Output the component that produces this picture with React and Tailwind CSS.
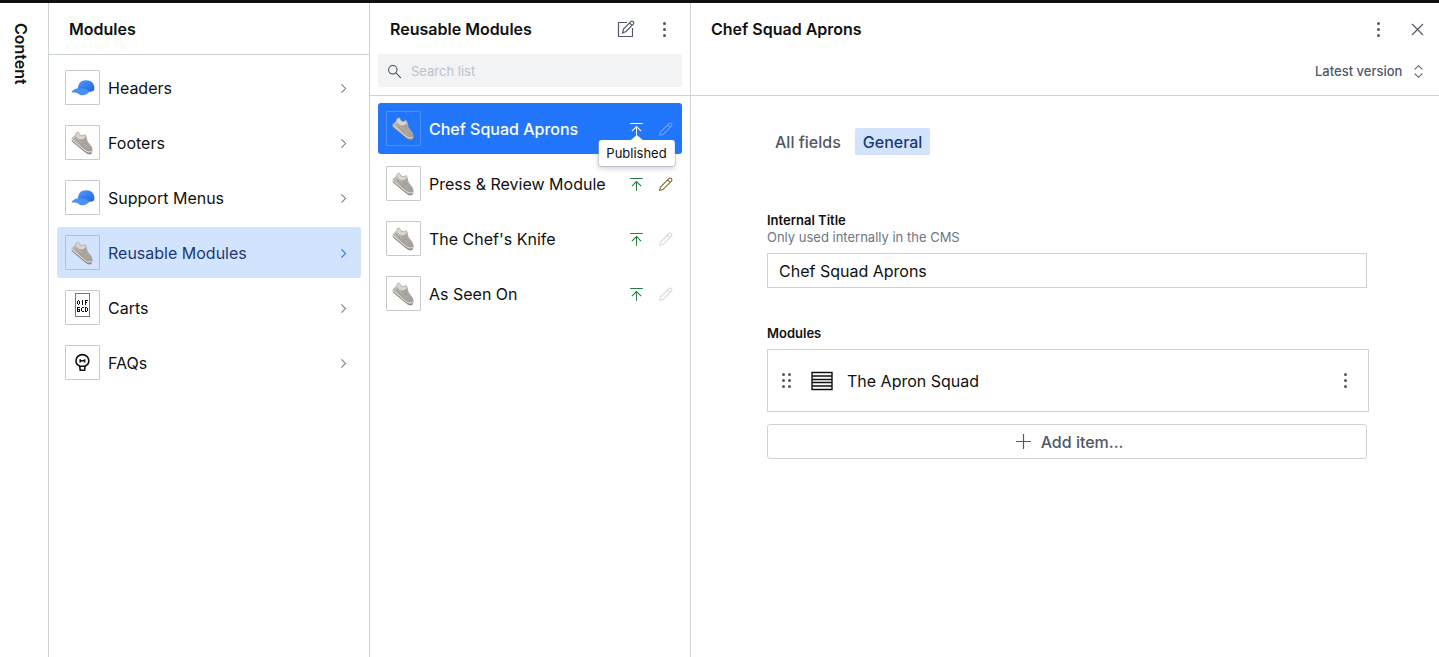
import { useState } from 'react';
import clsx from 'clsx';

const Icon = ({ className = 'size-[21px]', children }) => (
    <svg viewBox="0 0 25 25" fill="none" stroke="currentColor" strokeWidth="1.2" className={clsx('shrink-0', className)} aria-hidden="true">
        {children}
    </svg>
);

const ChevronIcon = () => (
    <Icon><path d="M10 7.5L15 12.5L10 17.5" /></Icon>
);

const PublishIcon = () => (
    <Icon><path d="M5 5.5H20M12.5 9V20M7 14.5L12.5 9L18 14.5" /></Icon>
);

const EditIcon = () => (
    <Icon><path d="M15 7L18 10M5.5 19.5L6.5 15.5L16.5 5.5C17.3 4.7 18.7 4.7 19.5 5.5C20.3 6.3 20.3 7.7 19.5 8.5L9.5 18.5L5.5 19.5Z" /></Icon>
);

const ComposeIcon = () => (
    <Icon className="size-[25px]">
        <path d="M14 5.5H5.5V19.5H19.5V11M9.5 16L10.5 12L17.8 4.7C18.4 4.1 19.4 4.1 20 4.7L20.3 5C20.9 5.6 20.9 6.6 20.3 7.2L13 14.5L9.5 16ZM16.5 6L19 8.5" />
    </Icon>
);

const EllipsisIcon = () => (
    <Icon className="size-[25px]">
        <g fill="currentColor" stroke="none">
            <circle cx="12.5" cy="6.5" r="1.5" />
            <circle cx="12.5" cy="12.5" r="1.5" />
            <circle cx="12.5" cy="18.5" r="1.5" />
        </g>
    </Icon>
);

const DragIcon = () => (
    <Icon className="size-[25px]">
        <g fill="currentColor" stroke="none">
            {[6.5, 12.5, 18.5].map((y) => (
                <g key={y}>
                    <circle cx="9.5" cy={y} r="1.5" />
                    <circle cx="15.5" cy={y} r="1.5" />
                </g>
            ))}
        </g>
    </Icon>
);

const CapArt = () => (
    <svg viewBox="0 0 24 24" className="size-6" aria-hidden="true">
        <defs>
            <linearGradient id="cap" x1="0" y1="0" x2="1" y2="1">
                <stop offset="0" stopColor="#4f9bff" />
                <stop offset="1" stopColor="#1f63dc" />
            </linearGradient>
        </defs>
        <path d="M7 13C6.8 7.5 10 4.2 15 4.2C20.5 4.2 23.5 7.5 23.4 12.5C23.3 14.7 22 15.6 19 15.8L13 15Z" fill="url(#cap)" />
        <path d="M7 12.2C11 11.4 15.5 12.2 18.8 15.5C15.5 19.5 11 20.6 6.8 17.4C4.8 16 2.6 16.6 0.8 16.4C0.5 14.8 3.4 13 7 12.2Z" fill="#4a90f8" />
        <path d="M7 12.2C11 11.4 15.5 12.2 18.8 15.5" stroke="#2a6fe0" strokeWidth="0.5" fill="none" />
    </svg>
);

const ShoeArt = () => (
    <svg viewBox="0 0 24 24" className="size-6" aria-hidden="true">
        <defs>
            <linearGradient id="shoe" x1="0" y1="0" x2="1" y2="1">
                <stop offset="0" stopColor="#c4bfba" />
                <stop offset="1" stopColor="#a19a94" />
            </linearGradient>
        </defs>
        <path d="M0.6 7.3L3.6 4.6L5.2 1.2L7.4 0.5L9.3 3.6L11.8 4.3L14.2 2.9L15.6 5.6L16.6 10.2L20.4 15.2C21.8 17.6 22 21 20.4 22.6C18.8 23.4 16.6 22.8 15 21.5L3 12L0.6 9.5Z" fill="url(#shoe)" />
        <path d="M4.6 5L5.9 1.9L7.2 1.4L8.8 4.4L11.8 5.2L13.8 4L14.6 6.3L11.8 8.6L8 7.8Z" fill="#d9d5d1" />
        <path d="M9.4 10L14.6 7.8M10.6 11.6L15.2 9.7M11.8 13.2L16 11.5" stroke="#938c86" strokeWidth="0.6" fill="none" />
        <path d="M4.4 7.2L8.2 11.4L12.6 16.2" stroke="#948e88" strokeWidth="0.8" fill="none" />
        <path d="M0.9 8.4L13.6 19.1C15.6 20.8 18.2 21.4 20.8 20.4" stroke="#e6e3e0" strokeWidth="0.9" fill="none" />
        <path d="M0.9 9.8L14.4 21.2C16.4 22.8 18.6 23.3 20.4 22.6" stroke="#7f7974" strokeWidth="0.9" fill="none" />
    </svg>
);

// Fallback box shown for a code point without a glyph
const MissingGlyphArt = () => (
    <svg viewBox="0 0 35 35" className="size-[35px] shrink-0" shapeRendering="crispEdges" fill="none" aria-hidden="true">
        <rect x="10.5" y="3.5" width="14" height="23" stroke="#777" />
        <g stroke="#111">
            <path d="M12.5 11V14M13 10.5H14M13 14.5H14M14.5 11V14M17.5 10V15M20.5 10V15M21 10.5H23M21 12.5H22" />
            <path d="M12.5 17V22M13 17.5H15M13 19.5H15M13 21.5H15M14.5 20V21M16.5 18V21M17 17.5H19M17 21.5H19M20.5 17V22M21 17.5H22M21 21.5H22M22.5 18V21" />
        </g>
    </svg>
);

const BulbArt = () => (
    <svg viewBox="0 0 35 35" className="size-[35px] shrink-0" fill="none" stroke="#111" strokeWidth="1.6" aria-hidden="true">
        <path d="M14.7 21C12.4 20 11 18 11 15.9C11 12.4 13.9 9.6 17.4 9.6S23.8 12.4 23.8 15.9C23.8 18 22.4 20 20.1 21L19.6 25.2H15.2ZM14.7 21.3H20.1" />
        <path d="M15.2 14.2V17.4M15.2 15.8H19.6M19.6 14.2V17.4" />
    </svg>
);

const artwork = {
    cap: CapArt,
    shoe: ShoeArt,
    missing: MissingGlyphArt,
    bulb: BulbArt,
};

const sections = [
    { title: 'Headers', art: 'cap' },
    { title: 'Footers', art: 'shoe' },
    { title: 'Support Menus', art: 'cap' },
    { title: 'Reusable Modules', art: 'shoe' },
    { title: 'Carts', art: 'missing' },
    { title: 'FAQs', art: 'bulb' },
];

const documents = [
    { title: 'Chef Squad Aprons', edited: false },
    { title: 'Press & Review Module', edited: true },
    { title: "The Chef's Knife", edited: false },
    { title: 'As Seen On', edited: false },
];

const Media = ({ art, className }) => {
    const Art = artwork[art];
    return (
        <span className={clsx('size-[35px] shrink-0 border rounded-[1px] flex items-center justify-center', className)}>
            <Art />
        </span>
    );
};

const Tooltip = ({ children }) => (
    <span role="tooltip" className="absolute top-[23px] left-1/2 -translate-x-1/2 z-10 rounded-[3px] bg-white px-2 py-1 text-[13px] leading-[18px] font-normal text-[#101112] shadow-[0_0_0_1px_rgba(110,118,131,0.25),0_3px_5px_rgba(110,118,131,0.3)]">
        <svg viewBox="0 0 12 5" className="absolute bottom-full left-1/2 -translate-x-1/2 w-3 h-[5px]" aria-hidden="true">
            <path d="M0 5L6 0L12 5Z" fill="#fff" />
        </svg>
        {children}
    </span>
);

const SectionPane = ({ selected, onSelect }) => (
    <section className="w-[321px] shrink-0 border-r border-[#ced2d9]">
        <header className="h-[52px] border-b border-[#ced2d9] px-5 flex items-center">
            <h2 className="font-semibold">Modules</h2>
        </header>
        <nav className="px-2 pt-[7px] flex flex-col gap-1">
            {sections.map(({ title, art }) => {
                const active = title === selected;
                return (
                    <a
                        key={title}
                        href="#"
                        onClick={() => onSelect(title)}
                        className={clsx('flex items-center gap-2 rounded-[3px] p-2 pr-[7px]', active ? 'bg-[#d2e3fe] text-[#1b3a75]' : 'text-[#101112]')}
                    >
                        <Media art={art} className={active ? 'border-[#adc0e0]' : 'border-[#cacaca]'} />
                        <span className="flex-1">{title}</span>
                        <span className={clsx('pt-0.5', active ? 'text-[#2469dc]' : 'text-[#6e7683]')}><ChevronIcon /></span>
                    </a>
                );
            })}
        </nav>
    </section>
);

const DocumentPane = ({ selected, onSelect }) => (
    <section className="w-[321px] shrink-0 border-r border-[#ced2d9]">
        <header className="border-b border-[#ced2d9]">
            <div className="h-[51px] pl-5 pr-[13px] flex items-center">
                <h2 className="flex-1 font-semibold">Reusable Modules</h2>
                <div className="pt-0.5 flex gap-[14px] text-[#515868]">
                    <button aria-label="Create new document"><ComposeIcon /></button>
                    <button aria-label="Show menu"><EllipsisIcon /></button>
                </div>
            </div>
            <label className="mx-2 mb-2 h-[33px] rounded-[3px] bg-[#f2f3f5] px-1.5 pt-0.5 flex items-center gap-1.5">
                <Icon className="size-[21px] text-[#40464f]">
                    <circle cx="10.5" cy="10.5" r="5" />
                    <path d="M14 14L20 20" />
                </Icon>
                <input type="search" aria-label="Search list" placeholder="Search list" className="w-full bg-transparent outline-none text-[13px] placeholder:text-[#bdc2cc]" />
            </label>
        </header>
        <ul className="px-2 pt-[7px] flex flex-col gap-1">
            {documents.map(({ title, edited }) => {
                const active = title === selected;
                return (
                    <li key={title}>
                        <a
                            href="#"
                            onClick={() => onSelect(title)}
                            className={clsx('flex items-center rounded-[3px] p-2 pr-1.5', active ? 'bg-[#2276fc] text-white font-medium' : 'text-[#101112]')}
                        >
                            <Media art="shoe" className={active ? 'border-[#4b91fd]' : 'border-[#cacaca]'} />
                            <span className="flex-1 pl-2">{title}</span>
                            <span className="flex gap-2">
                                <span className={clsx('relative pt-0.5', active ? 'text-white' : 'text-[#237c43]')}>
                                    <PublishIcon />
                                    {active && <Tooltip>Published</Tooltip>}
                                </span>
                                <span className={clsx('pt-0.5', edited ? 'text-[#806321]' : active ? 'text-[#6fa6fd]' : 'text-[#d5d6d9]')}>
                                    <EditIcon />
                                </span>
                            </span>
                        </a>
                    </li>
                );
            })}
        </ul>
    </section>
);

const EditorPane = ({ title }) => {
    const [tab, setTab] = useState('General');

    return (
        <section className="flex-1 min-w-0">
            <header className="h-[93px] border-b border-[#ced2d9] pl-5 pr-[9px]">
                <div className="h-[51px] flex items-center">
                    <h2 className="flex-1 font-semibold">{title}</h2>
                    <div className="pt-0.5 flex gap-[14px] text-[#515868]">
                        <button aria-label="Show menu"><EllipsisIcon /></button>
                        <button aria-label="Close pane">
                            <Icon className="size-[25px]"><path d="M18 7L7 18M7 7L18 18" /></Icon>
                        </button>
                    </div>
                </div>
                <label className="h-[33px] pt-0.5 pr-px flex items-center justify-end gap-[5px] text-[#515868]">
                    <select aria-label="Document version" className="appearance-none bg-transparent text-[13px] font-medium">
                        <option>Latest version</option>
                    </select>
                    <Icon><path d="M17 15L12.5 19.5L8 15M8 10L12.5 5.5L17 10" /></Icon>
                </label>
            </header>

            <div className="pl-1">
                <form className="max-w-[640px] mx-auto px-5 pt-8">
                    <div role="tablist" className="flex gap-1.5">
                        {['All fields', 'General'].map((name) => (
                            <button
                                key={name}
                                type="button"
                                role="tab"
                                aria-selected={tab === name}
                                onClick={() => setTab(name)}
                                className={clsx('h-[27px] rounded-[2px] px-2 font-medium', tab === name ? 'bg-[#d2e3fe] text-[#1b3a75]' : 'text-[#515868]')}
                            >
                                {name}
                            </button>
                        ))}
                    </div>

                    {/* Internal title */}
                    <div className="mt-[57px] text-[13px] leading-[17px]">
                        <label htmlFor="internal-title" className="block font-semibold">Internal Title</label>
                        <p className="text-[#6e7683]">Only used internally in the CMS</p>
                    </div>
                    <input id="internal-title" defaultValue="Chef Squad Aprons" className="mt-[7px] w-full h-[35px] border border-[#ced2d9] px-[11px] outline-none" />

                    {/* Module list */}
                    <h3 className="mt-[37px] text-[13px] leading-[17px] font-semibold">Modules</h3>
                    <div className="mt-[7px] -mr-0.5 h-[63px] border border-[#ced2d9] pl-1.5 pr-2.5 flex items-center">
                        <button type="button" aria-label="Drag to reorder" className="text-[#515868]"><DragIcon /></button>
                        <svg viewBox="0 0 22 20" className="ml-3 w-[22px] h-5" fill="none" stroke="#111" strokeWidth="1.4" aria-hidden="true">
                            <path d="M1 1.5H21V18.5H1ZM1 5H21M1 8.5H21M1 11.5H21M1 15H21" />
                        </svg>
                        <span className="flex-1 pl-[14px]">The Apron Squad</span>
                        <button type="button" aria-label="Show item menu" className="text-[#515868]"><EllipsisIcon /></button>
                    </div>
                    <button type="button" className="mt-3 w-full h-[35px] rounded-[3px] border border-[#ced2d9] flex items-center justify-center gap-[5px] font-medium text-[#515868]">
                        <Icon className="size-[25px]"><path d="M12.5 5V20M5 12.5H20" /></Icon>
                        Add item...
                    </button>
                </form>
            </div>
        </section>
    );
};

export default function App() {
    const [section, setSection] = useState('Reusable Modules');
    const [doc, setDoc] = useState('Chef Squad Aprons');

    return (
        <div className="min-h-screen flex flex-col bg-white font-['Inter',sans-serif] text-base text-[#101112]">
            <div className="h-[3px] bg-[#101112]" />
            <main className="flex-1 flex">
                <div className="w-[49px] shrink-0 border-r border-[#ced2d9] pt-5 pl-[9px]">
                    <button className="font-semibold [writing-mode:vertical-rl]">Content</button>
                </div>
                <SectionPane selected={section} onSelect={setSection} />
                <DocumentPane selected={doc} onSelect={setDoc} />
                <EditorPane title={doc} />
            </main>
        </div>
    );
}
